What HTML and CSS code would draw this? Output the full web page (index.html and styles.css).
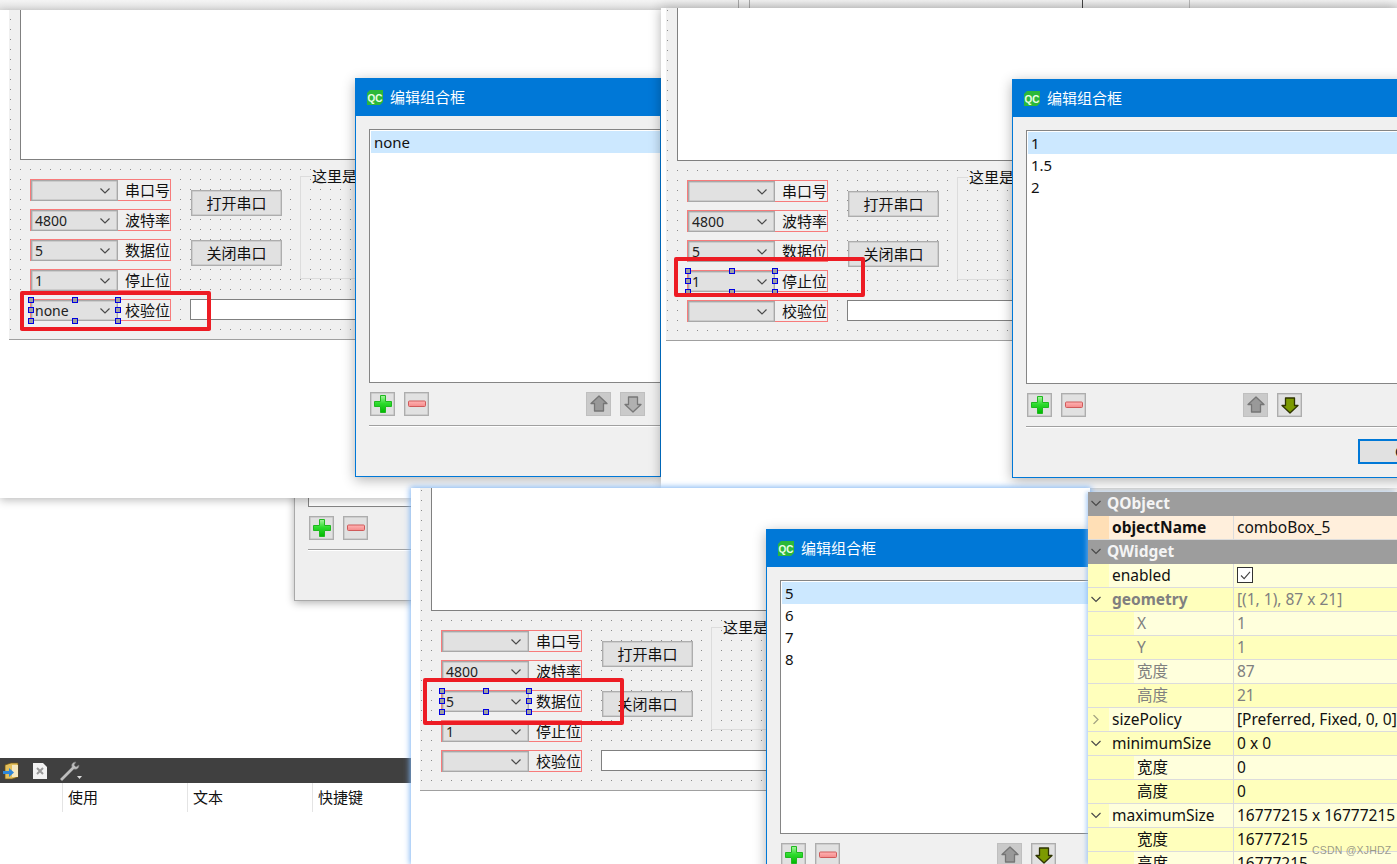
FILE: index.html
```html
<!DOCTYPE html>
<html lang="zh">
<head>
<meta charset="utf-8">
<title>编辑组合框</title>
<link rel="stylesheet" href="styles.css">
</head>
<body>
<svg class="defs" width="0" height="0" aria-hidden="true">
  <defs>
    <linearGradient id="gGreen" x1="0" y1="0" x2="0" y2="1"><stop offset="0" stop-color="#a8f5a0"/><stop offset=".45" stop-color="#2fdc2f"/><stop offset="1" stop-color="#00b800"/></linearGradient>
    <linearGradient id="gRed" x1="0" y1="0" x2="0" y2="1"><stop offset="0" stop-color="#ffb4b4"/><stop offset="1" stop-color="#f58a8a"/></linearGradient>
    <symbol id="i-plus" viewBox="0 0 18 18"><path d="M6.5.5h5v6h6v5h-6v6h-5v-6h-6v-5h6z" fill="url(#gGreen)" stroke="#1fb81f" stroke-linejoin="round"/></symbol>
    <symbol id="i-minus" viewBox="0 0 18 18"><rect x=".5" y="6" width="17" height="5.5" rx="1" fill="url(#gRed)" stroke="#cf5a5a"/></symbol>
    <symbol id="i-up" viewBox="0 0 18 18"><path d="M9 1l8 7.500h-3.500V16h-9V8.500H1z" fill="#999" stroke="#757575" stroke-width="1.300" stroke-linejoin="round"/></symbol>
    <symbol id="i-down-off" viewBox="0 0 18 18"><path d="M9 17L1 9.500h3.500V2h9v7.500H17z" fill="#b0b0b0" stroke="#777" stroke-width="1.300" stroke-linejoin="round"/></symbol>
    <symbol id="i-down-on" viewBox="0 0 18 18"><path d="M9 17L1 9.500h3.500V2h9v7.500H17z" fill="#7c9a00" stroke="#2e3300" stroke-width="1.300" stroke-linejoin="round"/></symbol>
    <symbol id="i-chev" viewBox="0 0 10 6"><path d="M.5.500L5 5l4.500-4.500" fill="none" stroke="#4a4a4a" stroke-width="1.200"/></symbol>
    <symbol id="i-qc" viewBox="0 0 16 15"><path d="M3 0h13v12l-3 3H0V3z" fill="#2cb83a"/><text x="8" y="11.500" text-anchor="middle" class="qc-text">QC</text></symbol>
  </defs>
</svg>

<main class="stage">
  <div class="strip">
    <span class="strip-cell c1"></span><span class="strip-cell c2"></span><span class="strip-cell c3"></span><span class="strip-cell c4"></span><span class="strip-cell c5"></span>
  </div>

  <!-- partly hidden dialog behind the windows -->
  <section class="backdlg">
    <div class="backlist"></div>
    <div class="tools">
      <button class="tbtn"><svg class="ico"><use href="#i-plus"/></svg></button>
      <button class="tbtn"><svg class="ico"><use href="#i-minus"/></svg></button>
    </div>
    <div class="sep"></div>
  </section>

  <!-- action editor, bottom left -->
  <section class="actions">
    <div class="actbar">
      <svg class="act-i1" viewBox="0 0 18 18"><path d="M3 3l6-2h7v14l-6 2H3z" fill="#e2bf5c" stroke="#6e5210" stroke-width=".7"/><path d="M10 3h6v12h-6z" fill="#f6e8bd"/><path d="M1 9h6V6l5 4.500L7 15v-3H1z" fill="#2d86d8"/></svg>
      <svg class="act-i2" viewBox="0 0 16 18"><path d="M1 1h10l4 4v12H1z" fill="#f2f2f2"/><path d="M5 6l6 6m0-6l-6 6" stroke="#999" stroke-width="2"/></svg>
      <svg class="act-i3" viewBox="0 0 24 20"><path d="M2 18L14 6c-1-3 1-5 4-5l-2 3 2 2 3-2c0 3-2 5-5 4L4 20z" fill="#bdbdbd" stroke="#777" stroke-width=".6"/><path d="M19 15h5l-2.500 3z" fill="#ddd"/></svg>
    </div>
    <div class="acthead">
      <span class="ah ah0"></span><span class="ah">使用</span><span class="ah">文本</span><span class="ah">快捷键</span>
    </div>
  </section>

  <!-- Window A -->
  <section class="win win-a">
    <div class="form">
      <div class="textarea"></div>
      <div class="ctrls">
        <div class="rows">
          <div class="row"><div class="combo"><svg class="chev"><use href="#i-chev"/></svg></div><span class="lbl">串口号</span></div>
          <div class="row"><div class="combo">4800<svg class="chev"><use href="#i-chev"/></svg></div><span class="lbl">波特率</span></div>
          <div class="row"><div class="combo">5<svg class="chev"><use href="#i-chev"/></svg></div><span class="lbl">数据位</span></div>
          <div class="row"><div class="combo">1<svg class="chev"><use href="#i-chev"/></svg></div><span class="lbl">停止位</span></div>
          <div class="row"><div class="combo sel">none<svg class="chev"><use href="#i-chev"/></svg>
            <i class="h tl"></i><i class="h tm"></i><i class="h tr"></i><i class="h ml"></i><i class="h mr"></i><i class="h bl"></i><i class="h bm"></i><i class="h br"></i></div><span class="lbl">校验位</span></div>
        </div>
        <div class="side">
          <div class="sidetop">
            <div class="btns"><div class="pbtn">打开串口</div><div class="pbtn">关闭串口</div></div>
            <div class="group"><span class="gtitle">这里是</span></div>
          </div>
          <div class="lineedit"></div>
        </div>
      </div>
    </div>
    <div class="mark mark-a"></div>
    <div class="dialog dlg-a">
      <header class="dtitle"><svg class="qc"><use href="#i-qc"/></svg><span>编辑组合框</span></header>
      <div class="dbody">
        <div class="list"><div class="item on">none</div></div>
        <div class="tools">
          <button class="tbtn"><svg class="ico"><use href="#i-plus"/></svg></button>
          <button class="tbtn"><svg class="ico"><use href="#i-minus"/></svg></button>
          <button class="tbtn off push"><svg class="ico"><use href="#i-up"/></svg></button>
          <button class="tbtn off"><svg class="ico"><use href="#i-down-off"/></svg></button>
        </div>
        <div class="sep"></div>
      </div>
    </div>
  </section>

  <!-- Window B -->
  <section class="win win-b">
    <div class="form">
      <div class="textarea"></div>
      <div class="ctrls">
        <div class="rows">
          <div class="row"><div class="combo"><svg class="chev"><use href="#i-chev"/></svg></div><span class="lbl">串口号</span></div>
          <div class="row"><div class="combo">4800<svg class="chev"><use href="#i-chev"/></svg></div><span class="lbl">波特率</span></div>
          <div class="row"><div class="combo">5<svg class="chev"><use href="#i-chev"/></svg></div><span class="lbl">数据位</span></div>
          <div class="row"><div class="combo sel">1<svg class="chev"><use href="#i-chev"/></svg>
            <i class="h tl"></i><i class="h tm"></i><i class="h tr"></i><i class="h ml"></i><i class="h mr"></i><i class="h bl"></i><i class="h bm"></i><i class="h br"></i></div><span class="lbl">停止位</span></div>
          <div class="row"><div class="combo"><svg class="chev"><use href="#i-chev"/></svg></div><span class="lbl">校验位</span></div>
        </div>
        <div class="side">
          <div class="sidetop">
            <div class="btns"><div class="pbtn">打开串口</div><div class="pbtn">关闭串口</div></div>
            <div class="group"><span class="gtitle">这里是</span></div>
          </div>
          <div class="lineedit"></div>
        </div>
      </div>
    </div>
    <div class="mark mark-b"></div>
    <div class="dialog dlg-b">
      <header class="dtitle"><svg class="qc"><use href="#i-qc"/></svg><span>编辑组合框</span></header>
      <div class="dbody">
        <div class="list"><div class="item on">1</div><div class="item">1.5</div><div class="item">2</div></div>
        <div class="tools">
          <button class="tbtn"><svg class="ico"><use href="#i-plus"/></svg></button>
          <button class="tbtn"><svg class="ico"><use href="#i-minus"/></svg></button>
          <button class="tbtn off push"><svg class="ico"><use href="#i-up"/></svg></button>
          <button class="tbtn"><svg class="ico"><use href="#i-down-on"/></svg></button>
        </div>
        <div class="sep"></div>
        <div class="okrow"><div class="okbtn">OK</div></div>
      </div>
    </div>
  </section>

  <!-- Window C -->
  <section class="win win-c">
    <div class="form">
      <div class="textarea"></div>
      <div class="ctrls">
        <div class="rows">
          <div class="row"><div class="combo"><svg class="chev"><use href="#i-chev"/></svg></div><span class="lbl">串口号</span></div>
          <div class="row"><div class="combo">4800<svg class="chev"><use href="#i-chev"/></svg></div><span class="lbl">波特率</span></div>
          <div class="row"><div class="combo sel">5<svg class="chev"><use href="#i-chev"/></svg>
            <i class="h tl"></i><i class="h tm"></i><i class="h tr"></i><i class="h ml"></i><i class="h mr"></i><i class="h bl"></i><i class="h bm"></i><i class="h br"></i></div><span class="lbl">数据位</span></div>
          <div class="row"><div class="combo">1<svg class="chev"><use href="#i-chev"/></svg></div><span class="lbl">停止位</span></div>
          <div class="row"><div class="combo"><svg class="chev"><use href="#i-chev"/></svg></div><span class="lbl">校验位</span></div>
        </div>
        <div class="side">
          <div class="sidetop">
            <div class="btns"><div class="pbtn">打开串口</div><div class="pbtn">关闭串口</div></div>
            <div class="group"><span class="gtitle">这里是</span></div>
          </div>
          <div class="lineedit"></div>
        </div>
      </div>
    </div>
    <div class="mark mark-c"></div>
    <div class="dialog dlg-c">
      <header class="dtitle"><svg class="qc"><use href="#i-qc"/></svg><span>编辑组合框</span></header>
      <div class="dbody">
        <div class="list"><div class="item on">5</div><div class="item">6</div><div class="item">7</div><div class="item">8</div></div>
        <div class="tools">
          <button class="tbtn"><svg class="ico"><use href="#i-plus"/></svg></button>
          <button class="tbtn"><svg class="ico"><use href="#i-minus"/></svg></button>
          <button class="tbtn off push"><svg class="ico"><use href="#i-up"/></svg></button>
          <button class="tbtn"><svg class="ico"><use href="#i-down-on"/></svg></button>
        </div>
      </div>
    </div>
  </section>

  <!-- Property editor -->
  <aside class="props">
    <div class="pr head"><div class="pk"><svg class="tw"><use href="#i-chev"/></svg><span class="pn">QObject</span></div></div>
    <div class="pr obj"><div class="pk"><span class="ind l0"></span><span class="pn">objectName</span></div><div class="pv">comboBox_5</div></div>
    <div class="pr head"><div class="pk"><svg class="tw"><use href="#i-chev"/></svg><span class="pn">QWidget</span></div></div>
    <div class="pr lt"><div class="pk"><span class="ind l0"></span><span class="pn">enabled</span></div><div class="pv"><span class="check"><svg viewBox="0 0 12 10"><path d="M1 5l3.500 3.500L11 1" fill="none" stroke="#444" stroke-width="1.200"/></svg></span></div></div>
    <div class="pr yl dis"><div class="pk"><svg class="tw"><use href="#i-chev"/></svg><span class="pn strong">geometry</span></div><div class="pv">[(1, 1), 87 x 21]</div></div>
    <div class="pr lt dis"><div class="pk"><span class="ind l1"></span><span class="pn">X</span></div><div class="pv">1</div></div>
    <div class="pr yl dis"><div class="pk"><span class="ind l1"></span><span class="pn">Y</span></div><div class="pv">1</div></div>
    <div class="pr lt dis"><div class="pk"><span class="ind l1"></span><span class="pn">宽度</span></div><div class="pv">87</div></div>
    <div class="pr yl dis"><div class="pk"><span class="ind l1"></span><span class="pn">高度</span></div><div class="pv">21</div></div>
    <div class="pr lt"><div class="pk"><span class="ind l0"><svg class="tw closed"><use href="#i-chev"/></svg></span><span class="pn">sizePolicy</span></div><div class="pv">[Preferred, Fixed, 0, 0]</div></div>
    <div class="pr yl"><div class="pk"><svg class="tw"><use href="#i-chev"/></svg><span class="pn">minimumSize</span></div><div class="pv">0 x 0</div></div>
    <div class="pr lt"><div class="pk"><span class="ind l1"></span><span class="pn">宽度</span></div><div class="pv">0</div></div>
    <div class="pr yl"><div class="pk"><span class="ind l1"></span><span class="pn">高度</span></div><div class="pv">0</div></div>
    <div class="pr lt"><div class="pk"><span class="ind l0"><svg class="tw"><use href="#i-chev"/></svg></span><span class="pn">maximumSize</span></div><div class="pv">16777215 x 16777215</div></div>
    <div class="pr yl"><div class="pk"><span class="ind l1"></span><span class="pn">宽度</span></div><div class="pv">16777215</div></div>
    <div class="pr lt"><div class="pk"><span class="ind l1"></span><span class="pn">高度</span></div><div class="pv">16777215</div></div>
  </aside>
  <div class="wm">CSDN @XJHDZ</div>
</main>
</body>
</html>
```
FILE: styles.css
```css
* { box-sizing: border-box; }
html, body { margin: 0; padding: 0; background: #fff; }
.defs { position: absolute; }
.stage {
  position: relative; width: 1397px; height: 864px; overflow: hidden; background: #fff;
  font-family: "Noto Sans", "Noto Sans CJK SC", sans-serif; color: #111;
}
.qc-text { font: 700 10px "Liberation Sans", sans-serif; fill: #e8ffe8; }

/* top strip */
.strip { display: flex; height: 11px; background: linear-gradient(#f4f4f4, #e2e2e2); }
.strip-cell { display: block; border-right: 1px solid #aaa; height: 100%; }
.strip-cell.c1 { width: 739px; flex: none; }
.strip-cell.c2 { width: 11px; flex: none; }
.strip-cell.c3 { width: 333px; flex: none; border-right-color: #444; }
.strip-cell.c4 { width: 107px; flex: none; border-right-color: #bbb; }
.strip-cell.c5 { flex: 1; border: 0; }

/* windows */
.win { position: absolute; background: #fff; }
.win-a { left: 0; top: 10px; width: 661px; height: 488px; box-shadow: 0 2px 9px rgba(0,0,0,.28); }
.win-b { left: 661px; top: 8px; width: 736px; height: 480px; box-shadow: 0 0 11px rgba(0,0,0,.32); }
.win-c { left: 411px; top: 488px; width: 679px; height: 376px; box-shadow: 0 0 6px 1px #7db3f3; }

.form {
  position: absolute; right: 0; bottom: auto;
  background-color: #f0f0f0;
  background-image: radial-gradient(circle at .5px .5px, #8c8c8c .6px, transparent .7px);
  background-size: 10px 10px;
  border-bottom: 1px solid #a0a0a0;
}
.win-a .form { left: 9px; top: 0; height: 330px; background-position: 1px 9px; }
.win-b .form { left: 5px; top: 0; height: 333px; background-position: 1px 2px; }
.win-c .form { left: 9px; top: 0; height: 303px; background-position: 1px 2px; }

.textarea { margin-left: 11px; background: #fff; border-left: 1px solid #808080; border-bottom: 1px solid #808080; }
.win-a .textarea { height: 150px; }
.win-b .textarea { height: 153px; }
.win-c .textarea { height: 123px; }

.ctrls { display: flex; padding: 19px 0 0 21px; }
.rows { display: flex; flex-direction: column; gap: 8px; width: 141px; }
.row { display: flex; height: 22px; border: 1px solid #f77b7b; background: #f0f0f0; }
.combo {
  position: relative; display: flex; align-items: center; width: 87px; height: 21px; padding-left: 3px;
  background: #e1e1e1; border: 1px solid #a8a8a8; box-shadow: inset 0 0 0 .5px #b5b5b5;
  font-size: 14px; line-height: 19px; color: #222;
}
.chev { position: absolute; right: 7px; top: 7px; width: 10px; height: 6px; }
.lbl { margin-left: 7px; font: 15px/20px "Noto Sans CJK SC", sans-serif; white-space: nowrap; color: #111; }

.h { position: absolute; width: 6px; height: 6px; background: #a0a0a0; border: 1px solid #0000e0; }
.tl { left: -4px; top: -4px; } .tm { left: 40px; top: -4px; } .tr { left: 83px; top: -4px; }
.ml { left: -4px; top: 6px; } .mr { left: 83px; top: 6px; }
.bl { left: -4px; top: 17px; } .bm { left: 40px; top: 17px; } .br { left: 83px; top: 17px; }

.side { margin-left: 19px; width: 300px; }
.sidetop { display: flex; height: 120px; }
.btns { display: flex; flex-direction: column; gap: 24px; margin: 11px 0 0 1px; width: 91px; }
.pbtn {
  display: flex; align-items: center; justify-content: center; height: 26px;
  background: #e1e1e1; border: 1px solid #adadad; box-shadow: inset 0 0 0 .5px #b9b9b9;
  font: 15px/20px "Noto Sans CJK SC", sans-serif; color: #111;
}
.group {
  position: relative; margin: -3px 0 0 18px; width: 120px; height: 103px;
  border: 1px solid #dcdcdc; border-right: 0;
}
.gtitle { position: absolute; left: 10px; top: -11px; padding-left: 1px; font: 15px/20px "Noto Sans CJK SC", sans-serif; background: #f0f0f0; white-space: nowrap; }
.lineedit { height: 21px; width: 280px; background: #fff; border: 1px solid #808080; }

/* red annotations */
.mark { position: absolute; border: 4px solid #ed1c24; border-radius: 2px; }
.mark-a { left: 20px; top: 281px; width: 191px; height: 40px; }
.mark-b { left: 13px; top: 249px; width: 191px; height: 40px; }
.mark-c { left: 12px; top: 190px; width: 201px; height: 47px; }

/* dialogs */
.dialog { position: absolute; width: 420px; background: #f0f0f0; border: 1px solid #0078d7; border-top: 0; box-shadow: 0 3px 12px rgba(0,0,0,.3); overflow: hidden; }
.dlg-a { left: 355px; top: 68px; height: 399px; width: 306px; }
.dlg-b { left: 351px; top: 71px; height: 399px; }
.dlg-c { left: 355px; top: 41px; height: 400px; width: 330px; }
.dtitle {
  display: flex; align-items: center; gap: 7px; height: 38px; margin: 0 -1px; padding-left: 12px;
  background: #0078d7; color: #fff; font: 15px/20px "Noto Sans CJK SC", sans-serif;
}
.qc { width: 16px; height: 15px; flex: none; }
.dbody { padding: 13px 0 0 13px; width: 500px; }
.list { height: 254px; background: #fff; border: 1px solid #858585; padding: 1px 0 0 1px; }
.item { height: 22px; padding-left: 3px; font-size: 15px; line-height: 22px; color: #111; }
.item.on { background: #cce8ff; }
.tools { display: flex; gap: 9px; margin: 9px 0 0 1px; }
.tbtn { display: flex; align-items: center; justify-content: center; width: 25px; height: 24px; padding: 0; background: #e1e1e1; border: 1px solid #adadad; box-shadow: inset 0 0 0 .5px #b9b9b9; }
.tbtn.off { background: #cacaca; border-color: #bfbfbf; box-shadow: none; }
.tbtn.push { margin-left: 148px; }
.ico { width: 18px; height: 18px; display: block; }
.sep { margin-top: 9px; height: 2px; border-top: 1px solid #a0a0a0; border-bottom: 1px solid #fff; }
.okrow { margin-top: 11px; display: flex; }
.okbtn { margin-left: 332px; width: 90px; height: 25px; padding-left: 35px; background: #e1e1e1; border: 2px solid #0078d7; font-size: 14px; line-height: 21px; }

/* dialog behind */
.backdlg { position: absolute; left: 294px; top: 440px; width: 200px; height: 161px; background: #efefef; border: 1px solid #a9a9a9; box-shadow: 0 2px 8px rgba(0,0,0,.3); padding: 0 0 0 13px; }
.backlist { height: 66px; background: #fff; border: 1px solid #858585; }
.backdlg .tools { margin-top: 9px; }

/* action editor */
.actions { position: absolute; left: 0; top: 758px; width: 411px; }
.actbar { display: flex; align-items: center; height: 25px; background: #404040; position: relative; }
.act-i1 { width: 18px; height: 18px; margin-left: 2px; }
.act-i2 { width: 16px; height: 18px; margin-left: 12px; }
.act-i3 { width: 24px; height: 20px; margin-left: 10px; }
.acthead { display: flex; height: 29px; }
.ah { display: block; flex: none; width: 125px; padding-left: 5px; border-left: 1px solid #e4e4e4; font: 15px/28px "Noto Sans CJK SC", sans-serif; color: #111; white-space: nowrap; }
.ah0 { width: 62px; border-left: 0; }

/* property editor */
.props { position: absolute; left: 1088px; top: 492px; width: 309px; height: 372px; overflow: hidden; font-size: 15.500px; background: #ffffd8; box-shadow: -2px 0 4px rgba(130,180,240,.6); }
.pr { display: grid; grid-template-columns: 146px 1fr; height: 24px; border-bottom: 1px solid #dcdcdc; line-height: 23px; white-space: nowrap; }
.pk { display: flex; align-items: center; height: 23px; border-right: 1px solid #dcdcdc; position: relative; }
.pv { padding-left: 3px; }
.pn { padding-left: 3px; }
.ind { display: block; height: 23px; flex: none; position: relative; background: #ffffbc; }
.ind.l0 { width: 21px; }
.ind.l1 { width: 46px; }
.tw { position: absolute; left: 3px; top: 8px; width: 10px; height: 7px; }
.tw.closed { transform: rotate(-90deg); opacity: .5; }
.pr .pk > .tw + .pn { margin-left: 21px; }
.head .pk > .tw + .pn { margin-left: 16px; }

.head { background: #9d9d9d; color: #f4f4f4; font-weight: 700; border-bottom: 1px solid #9d9d9d; }
.head .pk { border-right: 0; }
.obj { background: #ffefdc; font-weight: 400; }
.obj .pn { font-weight: 700; }
.obj .ind { background: #ffdfb6; }
.lt { background: #ffffdc; }
.yl { background: #ffffbc; }
.dis { color: #808080; }
.strong { font-weight: 700; }
.check { display: inline-flex; align-items: center; justify-content: center; width: 16px; height: 16px; margin-top: 3px; background: #fff; border: 1px solid #333; vertical-align: top; }
.check svg { width: 11px; height: 9px; }
.wm { position: absolute; left: 1312px; top: 843px; font: 10.500px/14px "Liberation Sans", sans-serif; color: rgba(110,110,110,.7); letter-spacing: .2px; }
```
